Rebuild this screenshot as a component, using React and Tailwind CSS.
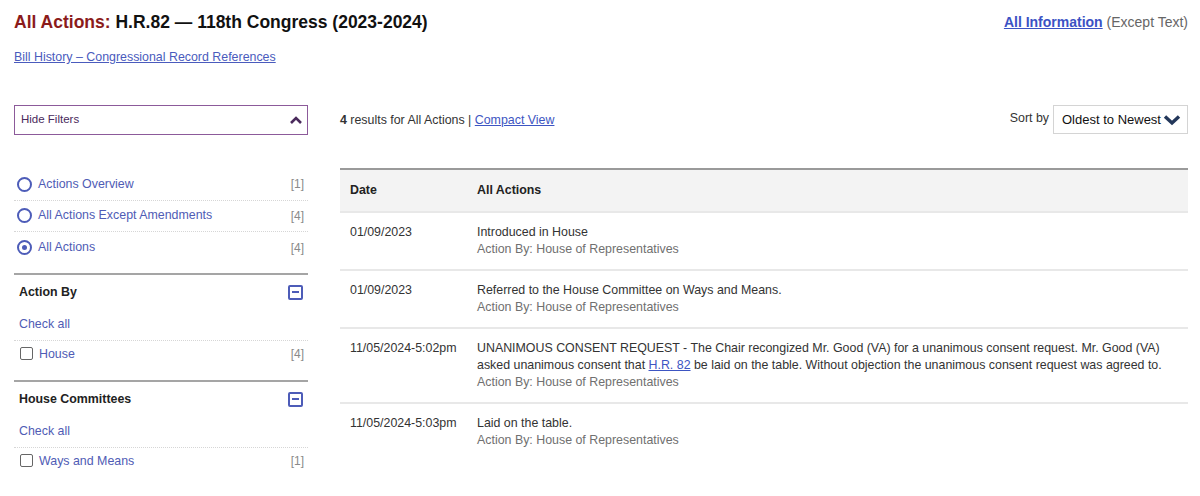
import React from "react";

const F = { fontFamily: '"Liberation Sans", Arial, sans-serif' };

function Radio({ checked }) {
  return (
    <span className="relative inline-flex h-[15px] w-[15px] shrink-0 items-center justify-center rounded-full border-2 border-[#4d5cb8]">
      {checked && <span className="h-[5px] w-[5px] rounded-full bg-[#4d5cb8]" />}
    </span>
  );
}

function Check() {
  return <span className="inline-block h-[13px] w-[13px] shrink-0 rounded-[2px] border-[1.5px] border-[#666]" />;
}

function Minus() {
  return (
    <span className="inline-flex h-[15px] w-[15px] items-center justify-center rounded-[2px] border-2 border-[#4d5cb8]">
      <span className="h-[2px] w-[7px] bg-[#4d5cb8]" />
    </span>
  );
}

function RadioRow({ label, count, checked, last }) {
  return (
    <div className={`flex h-[31.5px] items-center justify-between pl-[3px] pr-[4px] ${last ? "" : "border-b border-dotted border-[#d6d6d6]"}`}>
      <div className="flex items-center gap-[6px]">
        <Radio checked={checked} />
        <span className="text-[12.4px] text-[#4f5cb5]">{label}</span>
      </div>
      <span className="text-[12px] text-[#8a8a8a]">[{count}]</span>
    </div>
  );
}

function Section({ title, item, count }) {
  return (
    <div className="border-t-2 border-[#a5a5a5]">
      <div className="flex h-[35px] items-center justify-between pl-[5px] pr-[5px]">
        <span className="text-[12.4px] font-bold text-[#222]">{title}</span>
        <Minus />
      </div>
      <div className="flex h-[31px] items-center border-b border-dotted border-[#d6d6d6] pl-[5px]">
        <span className="text-[12.4px] text-[#4f5cb5]">Check all</span>
      </div>
      <div className="mb-[12px] flex h-[27px] items-center justify-between pl-[6px] pr-[4px]">
        <div className="flex items-center gap-[6px]">
          <Check />
          <span className="text-[12.4px] text-[#4f5cb5]">{item}</span>
        </div>
        <span className="text-[12px] text-[#8a8a8a]">[{count}]</span>
      </div>
    </div>
  );
}

const rows = [
  { date: "01/09/2023", text: "Introduced in House" },
  { date: "01/09/2023", text: "Referred to the House Committee on Ways and Means." },
  {
    date: "11/05/2024-5:02pm",
    text: (
      <>
        UNANIMOUS CONSENT REQUEST - The Chair recongized Mr. Good (VA) for a unanimous consent request. Mr. Good (VA)
        asked unanimous consent that <a className="text-[#3d55c2] underline">H.R. 82</a> be laid on the table. Without
        objection the unanimous consent request was agreed to.
      </>
    ),
  },
  { date: "11/05/2024-5:03pm", text: "Laid on the table." },
];

export default function App() {
  return (
    <div style={F} className="h-[496px] w-[1200px] bg-white pl-[14px] pr-[12px] pt-[9px] text-[#333]">
      <div className="flex items-start justify-between">
        <h1 className="text-[17.5px] font-bold leading-[26px] text-[#111]">
          <span className="text-[#8b1b1b]">All Actions:</span> H.R.82 — 118th Congress (2023-2024)
        </h1>
        <div className="pt-[1px] text-[14px] leading-[24px]">
          <a className="font-bold text-[#3b52c4] underline">All Information</a>{" "}
          <span className="text-[#666]">(Except Text)</span>
        </div>
      </div>
      <div className="mt-[14px] text-[12.4px] leading-[16px]">
        <a className="text-[#4a5bbd] underline">Bill History – Congressional Record References</a>
      </div>

      <div className="mt-[40px] flex gap-[32px]">
        {/* Sidebar */}
        <div className="w-[294px] shrink-0">
          <div className="flex h-[30px] items-center justify-between border border-[#8c5a9a] pl-[6px] pr-[4px]">
            <span className="text-[11.5px] text-[#4a2a5c]">Hide Filters</span>
            <svg width="14" height="10" viewBox="0 0 14 10">
              <path d="M2 8 L7 3 L12 8" fill="none" stroke="#4a2a5c" strokeWidth="2.6" />
            </svg>
          </div>
          <div className="mt-[34px]">
            <RadioRow label="Actions Overview" count="1" />
            <RadioRow label="All Actions Except Amendments" count="4" />
            <RadioRow label="All Actions" count="4" checked last />
          </div>
          <div className="mt-[9px]">
            <Section title="Action By" item="House" count="4" />
            <Section title="House Committees" item="Ways and Means" count="1" />
          </div>
        </div>

        {/* Main */}
        <div className="flex-1">
          <div className="flex h-[29px] items-center justify-between">
            <div className="pt-[1px] text-[12.4px] text-[#333]">
              <span className="font-bold">4</span> results for All Actions |{" "}
              <a className="text-[#3d55c2] underline">Compact View</a>
            </div>
            <div className="flex items-center gap-[4px]">
              <span className="mb-[2px] text-[12.4px] text-[#333]">Sort by</span>
              <div className="flex h-[29px] w-[135px] items-center justify-between border border-[#d4d4d4] pl-[8px] pr-[6px]">
                <span className="whitespace-nowrap text-[13px] text-[#111]">Oldest to Newest</span>
                <svg width="18" height="12" viewBox="0 0 18 12" className="shrink-0">
                  <path d="M2 2.5 L9 9 L16 2.5" fill="none" stroke="#23375a" strokeWidth="3.4" />
                </svg>
              </div>
            </div>
          </div>

          <div className="mt-[34px] border-t-2 border-[#9a9a9a]">
            <div className="flex h-[41px] items-center bg-[#f3f3f3] text-[12.4px] font-bold text-[#222]">
              <div className="w-[137px] pl-[10px]">Date</div>
              <div>All Actions</div>
            </div>
            {rows.map((r, i) => (
              <div key={i} className="flex border-t-2 border-[#e8e8e8] pb-[11px] pt-[11px] text-[12.4px] leading-[17px]">
                <div className="w-[137px] shrink-0 pl-[10px] text-[#333]">{r.date}</div>
                <div className="pr-[10px]">
                  <p className="text-[#333]">{r.text}</p>
                  <p className="text-[#707070]">Action By: House of Representatives</p>
                </div>
              </div>
            ))}
          </div>
        </div>
      </div>
    </div>
  );
}
